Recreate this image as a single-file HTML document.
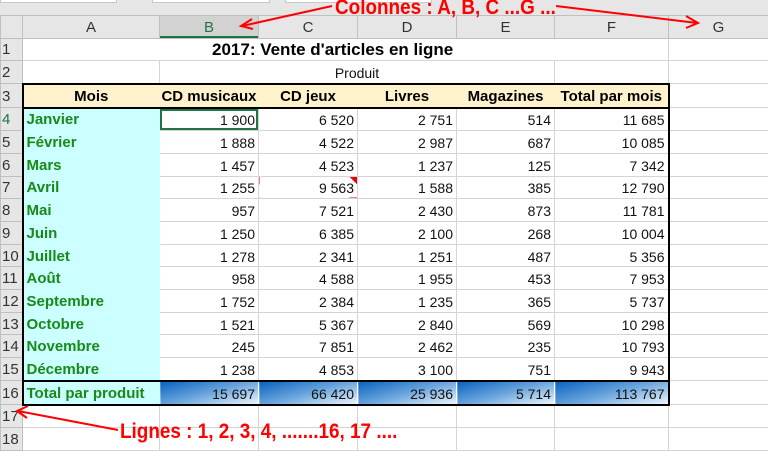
<!DOCTYPE html>
<html><head><meta charset="utf-8"><style>
body{margin:0;width:768px;height:446px;overflow:hidden;background:#fff;font-family:"Liberation Sans",sans-serif;position:relative}
.top{position:absolute;left:0;top:0;width:768px;height:15px;background:#e6e6e6}
.tb{position:absolute;top:0;height:2px;background:#fff;border:1px solid #c8c8c8;border-top:none}
table{position:absolute;left:0;top:15px;border-collapse:collapse;table-layout:fixed;width:768px}
td{height:19.7px;padding:2px 3px 0 3px;border:1px solid #d4d4d4;font-size:14px;white-space:nowrap;overflow:visible;text-align:right;color:#111;line-height:16px;vertical-align:middle}
tr.h td{background:#e6e6e6;text-align:center;color:#333;font-size:15px;border-color:#c0c0c0;height:19.5px}
td.r{background:#e6e6e6;text-align:left;color:#333;font-size:15px;padding:2px 0 0 1px;border-color:#c0c0c0}
td.m{background:#ccffff;color:#178a17;font-weight:bold;font-size:15px;text-align:left;border-color:#ccffff;border-left:2px solid #000}
tr.y td.c{background:#fff2cc;font-weight:bold;font-size:15px;text-align:center;color:#000;border-top:2px solid #000;border-bottom:2px solid #000;border-left-color:#fff2cc;border-right-color:#fff2cc;padding:2px 0 0 0}
td.g{background:linear-gradient(165deg,#0a63bf 0%,#6aa5dd 50%,#eef5fc 100%);border-top:2px solid #000;border-bottom:2px solid #000;border-left-color:#fff;border-right-color:#fff}
td.e{border-right:2px solid #000!important}
.ann{position:absolute;color:#ff0000;font-weight:bold;font-size:21px;font-family:"Liberation Sans Narrow","Liberation Sans",sans-serif;transform:scaleX(.9);transform-origin:left}
</style></head><body>
<div class="top"><div class="tb" style="left:0;width:115px"></div><div class="tb" style="left:152px;width:116px"></div><div class="tb" style="left:285px;width:145px"></div></div>
<table>
<colgroup><col style="width:22px"><col style="width:137px"><col style="width:99px"><col style="width:99px"><col style="width:99px"><col style="width:98px"><col style="width:114px"><col style="width:100px"></colgroup>
<tr class="h"><td style="background:#e6e6e6"></td><td>A</td><td style="background:#d2d2d2;color:#217346;box-shadow:inset 0 -2px 0 #217346">B</td><td>C</td><td>D</td><td>E</td><td>F</td><td>G</td></tr>
<tr><td class="r">1</td><td style="border-right-color:#fff"></td><td colspan="5" style="text-align:left;padding-left:52px;font-weight:bold;font-size:17px;color:#000">2017: Vente d'articles en ligne</td><td></td></tr>
<tr><td class="r">2</td><td style="border-bottom:none"></td><td colspan="4" style="text-align:center;font-size:14px;border-bottom:none">Produit</td><td style="border-bottom:none"></td><td></td></tr>
<tr class="y"><td class="r">3</td><td class="c" style="border-left:2px solid #000">Mois</td><td class="c">CD musicaux</td><td class="c">CD jeux</td><td class="c">Livres</td><td class="c">Magazines</td><td class="c e">Total par mois</td><td></td></tr>
<tr><td class="r" style="color:#217346">4</td><td class="m">Janvier</td><td style="box-shadow:inset 0 0 0 2px #217346">1 900</td><td>6 520</td><td>2 751</td><td>514</td><td class="e">11 685</td><td></td></tr>
<tr><td class="r">5</td><td class="m">Février</td><td>1 888</td><td>4 522</td><td>2 987</td><td>687</td><td class="e">10 085</td><td></td></tr>
<tr><td class="r">6</td><td class="m">Mars</td><td>1 457</td><td>4 523</td><td>1 237</td><td>125</td><td class="e">7 342</td><td></td></tr>
<tr><td class="r">7</td><td class="m">Avril</td><td>1 255</td><td style="background:linear-gradient(225deg,#e00 6px,transparent 6px)">9 563</td><td>1 588</td><td>385</td><td class="e">12 790</td><td></td></tr>
<tr><td class="r">8</td><td class="m">Mai</td><td>957</td><td>7 521</td><td>2 430</td><td>873</td><td class="e">11 781</td><td></td></tr>
<tr><td class="r">9</td><td class="m">Juin</td><td>1 250</td><td>6 385</td><td>2 100</td><td>268</td><td class="e">10 004</td><td></td></tr>
<tr><td class="r">10</td><td class="m">Juillet</td><td>1 278</td><td>2 341</td><td>1 251</td><td>487</td><td class="e">5 356</td><td></td></tr>
<tr><td class="r">11</td><td class="m">Août</td><td>958</td><td>4 588</td><td>1 955</td><td>453</td><td class="e">7 953</td><td></td></tr>
<tr><td class="r">12</td><td class="m">Septembre</td><td>1 752</td><td>2 384</td><td>1 235</td><td>365</td><td class="e">5 737</td><td></td></tr>
<tr><td class="r">13</td><td class="m">Octobre</td><td>1 521</td><td>5 367</td><td>2 840</td><td>569</td><td class="e">10 298</td><td></td></tr>
<tr><td class="r">14</td><td class="m">Novembre</td><td>245</td><td>7 851</td><td>2 462</td><td>235</td><td class="e">10 793</td><td></td></tr>
<tr><td class="r">15</td><td class="m">Décembre</td><td>1 238</td><td>4 853</td><td>3 100</td><td>751</td><td class="e">9 943</td><td></td></tr>
<tr><td class="r">16</td><td class="m" style="border-top:2px solid #000;border-bottom:2px solid #000">Total par produit</td><td class="g">15 697</td><td class="g">66 420</td><td class="g">25 936</td><td class="g">5 714</td><td class="g e">113 767</td><td></td></tr>
<tr><td class="r">17</td><td></td><td></td><td></td><td></td><td></td><td></td><td></td></tr>
<tr><td class="r">18</td><td></td><td></td><td></td><td></td><td></td><td></td><td></td></tr>
</table>
<div class="ann" style="left:335px;top:-4px">Colonnes : A, B, C ...G ...</div>
<div class="ann" style="left:120px;top:420px">Lignes : 1, 2, 3, 4, .......16, 17 ....</div>
<svg style="position:absolute;left:0;top:0" width="768" height="446">
<g stroke="#f00" stroke-width="2" fill="none">
<line x1="332" y1="6" x2="242" y2="26"/><polyline points="252,19 241,26 253,29"/>
<line x1="556" y1="6" x2="697" y2="23"/><polyline points="686,16 698,23 686,28"/>
<line x1="118" y1="430" x2="18" y2="411"/><polyline points="28,406 17,411 27,418"/>
</g></svg>
</body></html>
